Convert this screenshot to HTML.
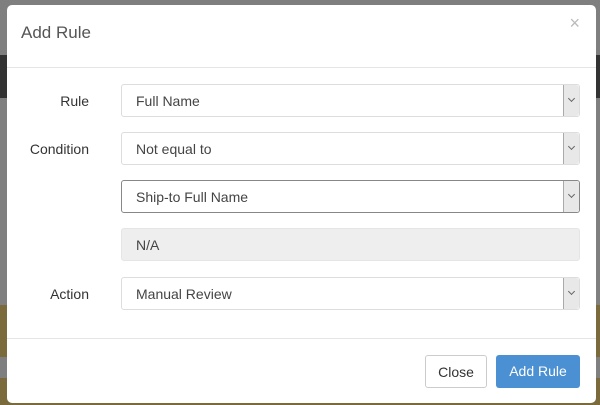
<!DOCTYPE html>
<html><head><style>
*{box-sizing:border-box;margin:0;padding:0}
body{width:600px;height:405px;overflow:hidden;background:#7f7f7f;position:relative;font-family:"Liberation Sans",sans-serif}
.band{position:absolute;left:0;width:600px}
.modal{position:absolute;left:7px;top:5px;width:589px;height:398px;background:#fff;border-radius:5px}
.title{position:absolute;left:14px;top:18px;font-size:17px;color:#555}
.x{position:absolute;right:16px;top:8px;font-size:18px;color:#bbb}
.hr{position:absolute;left:0;width:589px;height:1px;background:#e5e5e5}
.lbl{position:absolute;font-size:14px;color:#333;text-align:right;width:82px;left:0}
.sel{position:absolute;left:114px;width:459px;height:33px;border:1px solid #ddd;border-radius:3px;font-size:14px;color:#444;padding:8px 14px;background:#fff}
.sel.d{border-color:#888}
.sel .a{position:absolute;right:0;top:0;bottom:0;width:16px;background:#e8e8e8;border-left:1px solid #aaa;border-radius:0 3px 3px 0}
.sel .a:after{content:"";position:absolute;left:5px;top:11px;width:4px;height:4px;border-right:1px solid #666;border-bottom:1px solid #666;transform:rotate(45deg)}
.na{background:#eee;border-color:#e5e5e5}
.btn{position:absolute;top:350px;height:33px;border-radius:3px;font-size:14px;padding:8px 0;text-align:center}
</style></head><body>
<div class="band" style="top:55px;height:43px;background:#333"></div>
<div class="band" style="top:305px;height:52px;background:#7a6a3c"></div>
<div class="band" style="top:378px;height:27px;background:#7a6a3c"></div>
<div class="modal">
<div class="title">Add Rule</div>
<div class="x">×</div>
<div class="hr" style="top:62px"></div>
<div class="lbl" style="top:88px">Rule</div>
<div class="sel" style="top:79px">Full Name<span class="a"></span></div>
<div class="lbl" style="top:136px">Condition</div>
<div class="sel" style="top:127px">Not equal to<span class="a"></span></div>
<div class="sel d" style="top:175px">Ship-to Full Name<span class="a"></span></div>
<div class="sel na" style="top:223px">N/A</div>
<div class="lbl" style="top:281px">Action</div>
<div class="sel" style="top:272px">Manual Review<span class="a"></span></div>
<div class="hr" style="top:333px"></div>
<div class="btn" style="left:418px;width:62px;border:1px solid #ccc;color:#333">Close</div>
<div class="btn" style="left:489px;width:84px;background:#4a90d2;color:#fff">Add Rule</div>
</div>
</body></html>
